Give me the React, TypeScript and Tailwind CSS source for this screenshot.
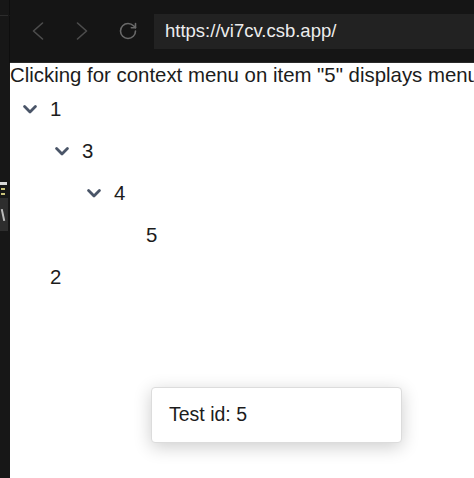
import { RotateCw } from "lucide-react";

type Node = { id: string; depth: number; open?: boolean };

const rows: Node[] = [
  { id: "1", depth: 0, open: true },
  { id: "3", depth: 1, open: true },
  { id: "4", depth: 2, open: true },
  { id: "5", depth: 3 },
  { id: "2", depth: 0 },
];

const pad = ["pl-[13px]", "pl-[45px]", "pl-[77px]", "pl-[109px]"];

function Chevron() {
  return (
    <svg width="14" height="9" viewBox="0 0 14 9" fill="none">
      <polyline
        points="1.6,1.6 7,7 12.4,1.6"
        stroke="#4a5568"
        strokeWidth="2.8"
        strokeLinecap="round"
        strokeLinejoin="round"
      />
    </svg>
  );
}

function NavArrow({ dir }: { dir: "left" | "right" }) {
  return (
    <svg width="12" height="18" viewBox="0 0 12 18" fill="none">
      <polyline
        points={dir === "left" ? "10.5,1 1.5,9 10.5,17" : "1.5,1 10.5,9 1.5,17"}
        stroke="#4d4d4d"
        strokeWidth="1.6"
        strokeLinecap="round"
        strokeLinejoin="round"
      />
    </svg>
  );
}

function TreeRow({ node }: { node: Node }) {
  return (
    <li className={`h-[42px] flex items-center gap-[13px] ${pad[node.depth]}`}>
      <span className="w-[14px] flex justify-center">{node.open && <Chevron />}</span>
      <span>{node.id}</span>
    </li>
  );
}

export default function App() {
  return (
    <div className="relative w-[474px] h-[478px] overflow-hidden flex bg-white font-['Liberation_Sans',Arial,sans-serif]">
      {/* editor strip on the left */}
      <div className="w-[10px] shrink-0 bg-[#171717] flex flex-col">
        <div className="h-[15px] border-r border-[#0e0e0e]" />
        <div className="h-px w-[8px] bg-[#2c2c2c]" />
        <div className="h-[47px] border-r border-[#0e0e0e]" />
        <div className="h-[119px]" />
        <div className="h-[3px] w-[7px] bg-[#d8d8d8]" />
        <div className="h-[13px] flex flex-col justify-center gap-[3px] pl-[1px]">
          <div className="h-[2px] w-[4px] bg-[#c9c27a]" />
          <div className="h-[2px] w-[4px] bg-[#c9c27a]" />
        </div>
        <div className="h-[33px] w-[8px] bg-[#2e2e2e] flex items-center pl-[2px]">
          <div className="h-[12px] w-[2px] bg-[#bdbdbd] -rotate-12" />
        </div>
      </div>

      <div className="flex-1 min-w-0 flex flex-col">
        {/* browser bar */}
        <div className="h-[63px] shrink-0 bg-[#151515] border-b border-[#2a2a2a] flex items-center">
          <div className="ml-[22px] w-[12px] flex"><NavArrow dir="left" /></div>
          <div className="ml-[32px] w-[12px] flex"><NavArrow dir="right" /></div>
          <div className="ml-[30px] flex">
            <RotateCw size={20} color="#6a6a6a" strokeWidth={1.9} />
          </div>
          <div className="ml-[16px] flex-1 h-[35px] bg-[#222222] flex items-center pl-[11px] text-[18.5px] text-[#ededed] whitespace-nowrap">
            https://vi7cv.csb.app/
          </div>
        </div>

        {/* page */}
        <div className="flex-1 bg-white text-[20.4px] leading-[23px] text-[#1c1c1c]">
          <p className="whitespace-nowrap pt-[1px]">
            Clicking for context menu on item "5" displays menu
          </p>
          <ul className="mt-[1px]">
            {rows.map((n) => (
              <TreeRow key={n.id} node={n} />
            ))}
          </ul>
        </div>
      </div>

      {/* context menu */}
      <div className="absolute left-[151px] top-[387px] w-[251px] h-[56px] bg-white rounded-[4px] border border-[#dcdcdc] shadow-[0_4px_18px_rgba(0,0,0,0.2)] flex items-center pl-[17px] text-[19.5px] text-[#1c1c1c]">
        Test id: 5
      </div>
    </div>
  );
}
